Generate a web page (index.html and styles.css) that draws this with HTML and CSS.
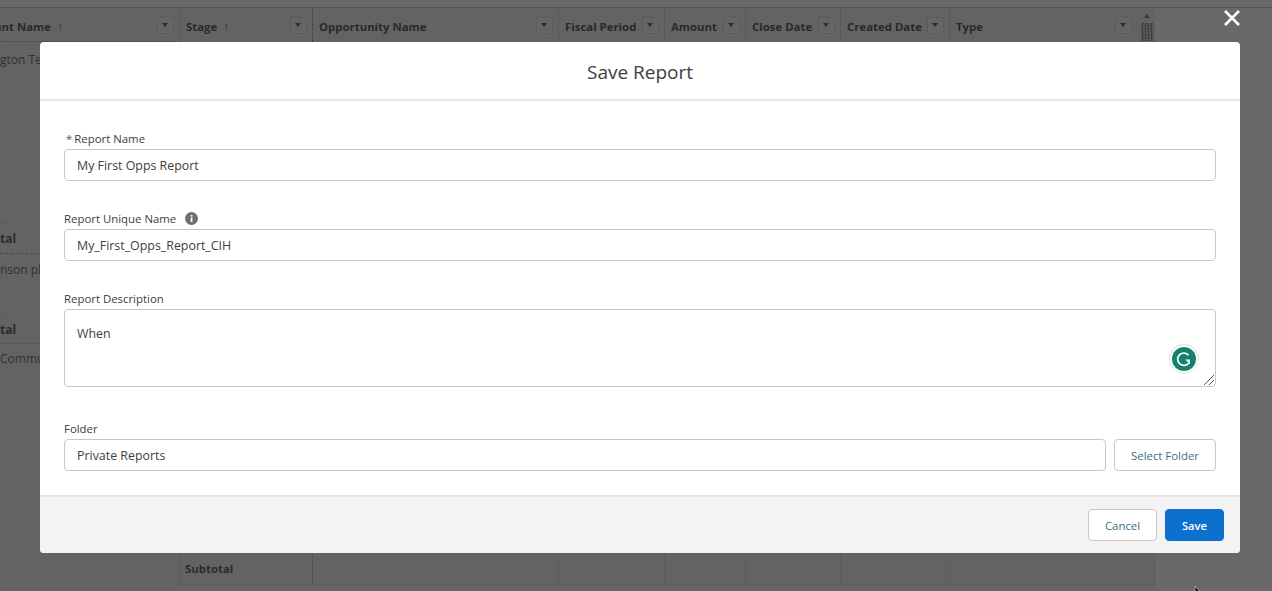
FILE: index.html
```html
<!DOCTYPE html>
<html lang="en">
<head>
<meta charset="utf-8">
<title>Save Report</title>
<link rel="stylesheet" href="styles.css">
</head>
<body>
<div class="report">
  <div class="topbar"></div>
  <div class="grid">
    <div class="hcell c1"><span class="first-label">unt Name</span><span class="arrow">↑</span><span class="filter"></span></div>
    <div class="hcell c2"><span>Stage</span><span class="arrow">↑</span><span class="filter"></span></div>
    <div class="hcell c3"><span>Opportunity Name</span><span class="filter"></span></div>
    <div class="hcell c4"><span>Fiscal Period</span><span class="filter"></span></div>
    <div class="hcell c5"><span>Amount</span><span class="filter"></span></div>
    <div class="hcell c6"><span>Close Date</span><span class="filter"></span></div>
    <div class="hcell c7"><span>Created Date</span><span class="filter"></span></div>
    <div class="hcell c8"><span>Type</span><span class="filter"></span>
      <span class="scroll"><span class="scroll-up"></span><span class="scroll-thumb"></span></span>
    </div>
  </div>
  <div class="rows">
    <div class="left-col">
      <div class="lrow r1">gton Tex</div>
      <div class="lrow bold r2">tal</div>
      <div class="lrow r3">nson plc</div>
      <div class="lrow bold r4">tal</div>
      <div class="lrow r5">Commun</div>
    </div>
    <div class="col stage-col"><div class="subtotal">Subtotal</div></div>
    <div class="col w246"></div>
    <div class="col w106"></div>
    <div class="col w81"></div>
    <div class="col w95"></div>
    <div class="col w109"></div>
    <div class="col w205"></div>
  </div>
</div>

<div class="overlay"></div>
<button class="close" type="button" aria-label="Close">
  <svg width="18" height="18" viewBox="0 0 18 18"><path d="M2 2 16 16M16 2 2 16" stroke="#fff" stroke-width="2.6" fill="none"/></svg>
</button>
<section class="modal">
  <header class="modal-head"><h2>Save Report</h2></header>
  <div class="modal-body">
    <div class="field">
      <label class="lbl"><span class="req">*</span>Report Name</label>
      <div class="input">My First Opps Report</div>
    </div>
    <div class="field">
      <label class="lbl">Report Unique Name
        <svg class="info" width="13" height="13" viewBox="0 0 13 13"><circle cx="6.5" cy="6.5" r="6.5" fill="#706e6b"/><rect x="5.7" y="5.4" width="1.7" height="4.6" fill="#fff"/><rect x="5.7" y="3" width="1.7" height="1.6" fill="#fff"/></svg>
      </label>
      <div class="input">My_First_Opps_Report_CIH</div>
    </div>
    <div class="field">
      <label class="lbl">Report Description</label>
      <div class="textarea">When
        <span class="grammarly"><svg width="24" height="24" viewBox="0 0 24 24"><circle cx="12" cy="12" r="12" fill="#15826f"/><path d="M16.6 8.2A6.2 6.2 0 1 0 16.8 16" stroke="#fff" stroke-width="1.7" fill="none"/><path d="M13.2 12.4H18V17.2Z" fill="#fff"/></svg></span>
        <svg class="resize" width="12" height="12" viewBox="0 0 12 12"><path d="M1 11 11 1M6 11 11 6" stroke="#555" stroke-width="1" fill="none"/></svg>
      </div>
    </div>
    <div class="field">
      <label class="lbl">Folder</label>
      <div class="folder-row">
        <div class="input grow">Private Reports</div>
        <button class="btn folder" type="button">Select Folder</button>
      </div>
    </div>
  </div>
  <footer class="modal-foot">
    <button class="btn cancel" type="button">Cancel</button>
    <button class="btn save" type="button">Save</button>
  </footer>
</section>
<svg class="cursor" width="10" height="8" viewBox="0 0 10 8"><path d="M1 0V8H8L1 0Z" fill="#111" stroke="#ddd" stroke-width=".6"/></svg>
</body>
</html>
```
FILE: styles.css
```css
* { box-sizing: border-box; }
html, body { margin: 0; padding: 0; width: 1272px; height: 591px; overflow: hidden; }
body { background: #fff; font-family: "Open Sans", "Liberation Sans", sans-serif; color: #080707; position: relative; }

.report { width: 1272px; height: 591px; background: #fff; }
.topbar { height: 8px; border-bottom: 1px solid #bdbdbd; }
.grid {
  display: grid;
  grid-template-columns: 180px 133px 246px 106px 81px 95px 109px 205px;
  width: 1155px;
  height: 33px;
  background: #eee;
  font: bold 11.4px "Open Sans", sans-serif;
  color: #2b2b2b;
}
.hcell { display: flex; align-items: center; padding: 3px 6px 0; border-right: 1px solid #ccc; gap: 6px; white-space: nowrap; }
.c1 { padding-left: 0; }
.first-label { margin-left: -6px; }
.c2 { border-right: 1px dotted #555; }
.hcell > .filter { margin-left: auto; width: 15px; height: 15px; flex: none; border: 1px solid #fff; border-radius: 2px; background: #f4f4f4; box-shadow: 0 0 0 1px #d4d4d4; position: relative; top: -1px; }
.filter::after { content: ""; position: absolute; left: 3px; top: 4px; border: 3.5px solid transparent; border-top: 4px solid #333; }
.arrow { font-weight: 400; font-size: 12px; color: #555; }
.c8 { border-right: none; padding-right: 1px; }
.scroll { width: 14px; height: 33px; flex: none; display: flex; flex-direction: column; align-items: center; margin-top: -3px; margin-left: 3px; padding-top: 6px; gap: 5px; }
.scroll-up { width: 0; height: 0; border: 3px solid transparent; border-top: 0; border-bottom: 4px solid #555; }
.scroll-thumb { width: 13px; flex: 1; background: repeating-conic-gradient(#777 0 25%, #e4e4e4 0 50%) 0 0 / 3px 3px; }

.rows { display: flex; width: 1155px; height: 550px; background: #f6f6f6; font-size: 12px; }
.left-col { width: 180px; flex: none; display: flex; flex-direction: column; color: #444; background: #eee; white-space: nowrap; }
.lrow { display: flex; align-items: center; }
.r1 { height: 183px; align-items: flex-start; padding-top: 9px; border-top: 1px dotted #999; border-bottom: 1px dotted #d0d0d0; }
.r2 { height: 30px; border-bottom: 1px dashed #999; }
.r3 { height: 61px; align-items: flex-start; padding-top: 7px; border-bottom: 1px dotted #d0d0d0; }
.r4 { height: 29px; border-bottom: 1px solid #ccc; }
.r5 { flex: 1; align-items: flex-start; padding-top: 6px; }
.bold { font-weight: 700; color: #333; }

.col { height: 544px; background: #eee; border-right: 1px dotted #c4c4c4; border-bottom: 1px dotted #c4c4c4; flex: none; }
.stage-col { width: 133px; border-left: 1px dotted #c4c4c4; border-right: 1px dotted #777; display: flex; flex-direction: column; }
.w246 { width: 246px; }
.w106 { width: 106px; }
.w81 { width: 81px; }
.w95 { width: 95px; }
.w109 { width: 109px; }
.w205 { width: 205px; }
.subtotal { margin-top: 520px; padding-left: 4px; font-weight: 700; font-size: 11.4px; color: #333; }

.overlay { position: absolute; inset: 0; background: rgba(42, 40, 42, .7); }
.close { position: absolute; left: 1223px; top: 9px; width: 18px; height: 18px; padding: 0; border: 0; background: none; display: block; }
.close svg { display: block; }

.modal { position: absolute; left: 40px; top: 42px; width: 1200px; height: 511px; background: #fff; border-radius: 4px; overflow: hidden; display: flex; flex-direction: column; }
.modal-head { height: 59px; border-bottom: 2px solid #e5e5e5; display: flex; align-items: center; justify-content: center; padding-top: 2px; flex: none; }
.modal-head h2 { margin: 0; font-size: 19px; font-weight: 400; color: #3e3e3c; }
.modal-body { flex: 1; padding: 29px 24px 0; display: flex; flex-direction: column; gap: 29px; }
.lbl { display: flex; align-items: center; height: 19px; padding-bottom: 2px; font-size: 11.4px; color: #3e3e3c; }
.req { margin: 0 2px 0 2px; color: #555; }
.info { margin-left: 9px; }
.input { height: 32px; border: 1px solid #c9c7c5; border-radius: 4px; padding: 0 12px; display: flex; align-items: center; font-size: 12.4px; color: #3e3e3c; background: #fff; }
.textarea { height: 78px; margin-bottom: 4px; border: 1px solid #c9c7c5; border-radius: 4px; padding: 14px 12px; font-size: 12.4px; line-height: 20px; color: #3e3e3c; position: relative; }
.grammarly { position: absolute; right: 16px; bottom: 12px; width: 30px; height: 30px; border-radius: 50%; background: #fff; border: 1px solid #ddd; display: flex; align-items: center; justify-content: center; }
.resize { position: absolute; right: 0; bottom: 0; }
.folder-row { display: flex; gap: 8px; }
.grow { flex: 1; }
.btn { height: 32px; border: 1px solid #c9c7c5; border-radius: 4px; background: #fff; font-family: "Open Sans", sans-serif; font-size: 11.4px; color: #3c6f86; padding: 0; }
.folder { width: 102px; }
.modal-foot { height: 58px; background: #f3f3f3; border-top: 2px solid #e5e5e5; display: flex; justify-content: flex-end; align-items: center; gap: 8px; padding: 0 16px; flex: none; }
.cancel { width: 69px; }
.save { width: 59px; background: #0b70ce; border-color: #0b70ce; color: #fff; font-weight: 600; font-size: 11.2px; }
.cursor { position: absolute; left: 1194px; top: 586px; }
```
